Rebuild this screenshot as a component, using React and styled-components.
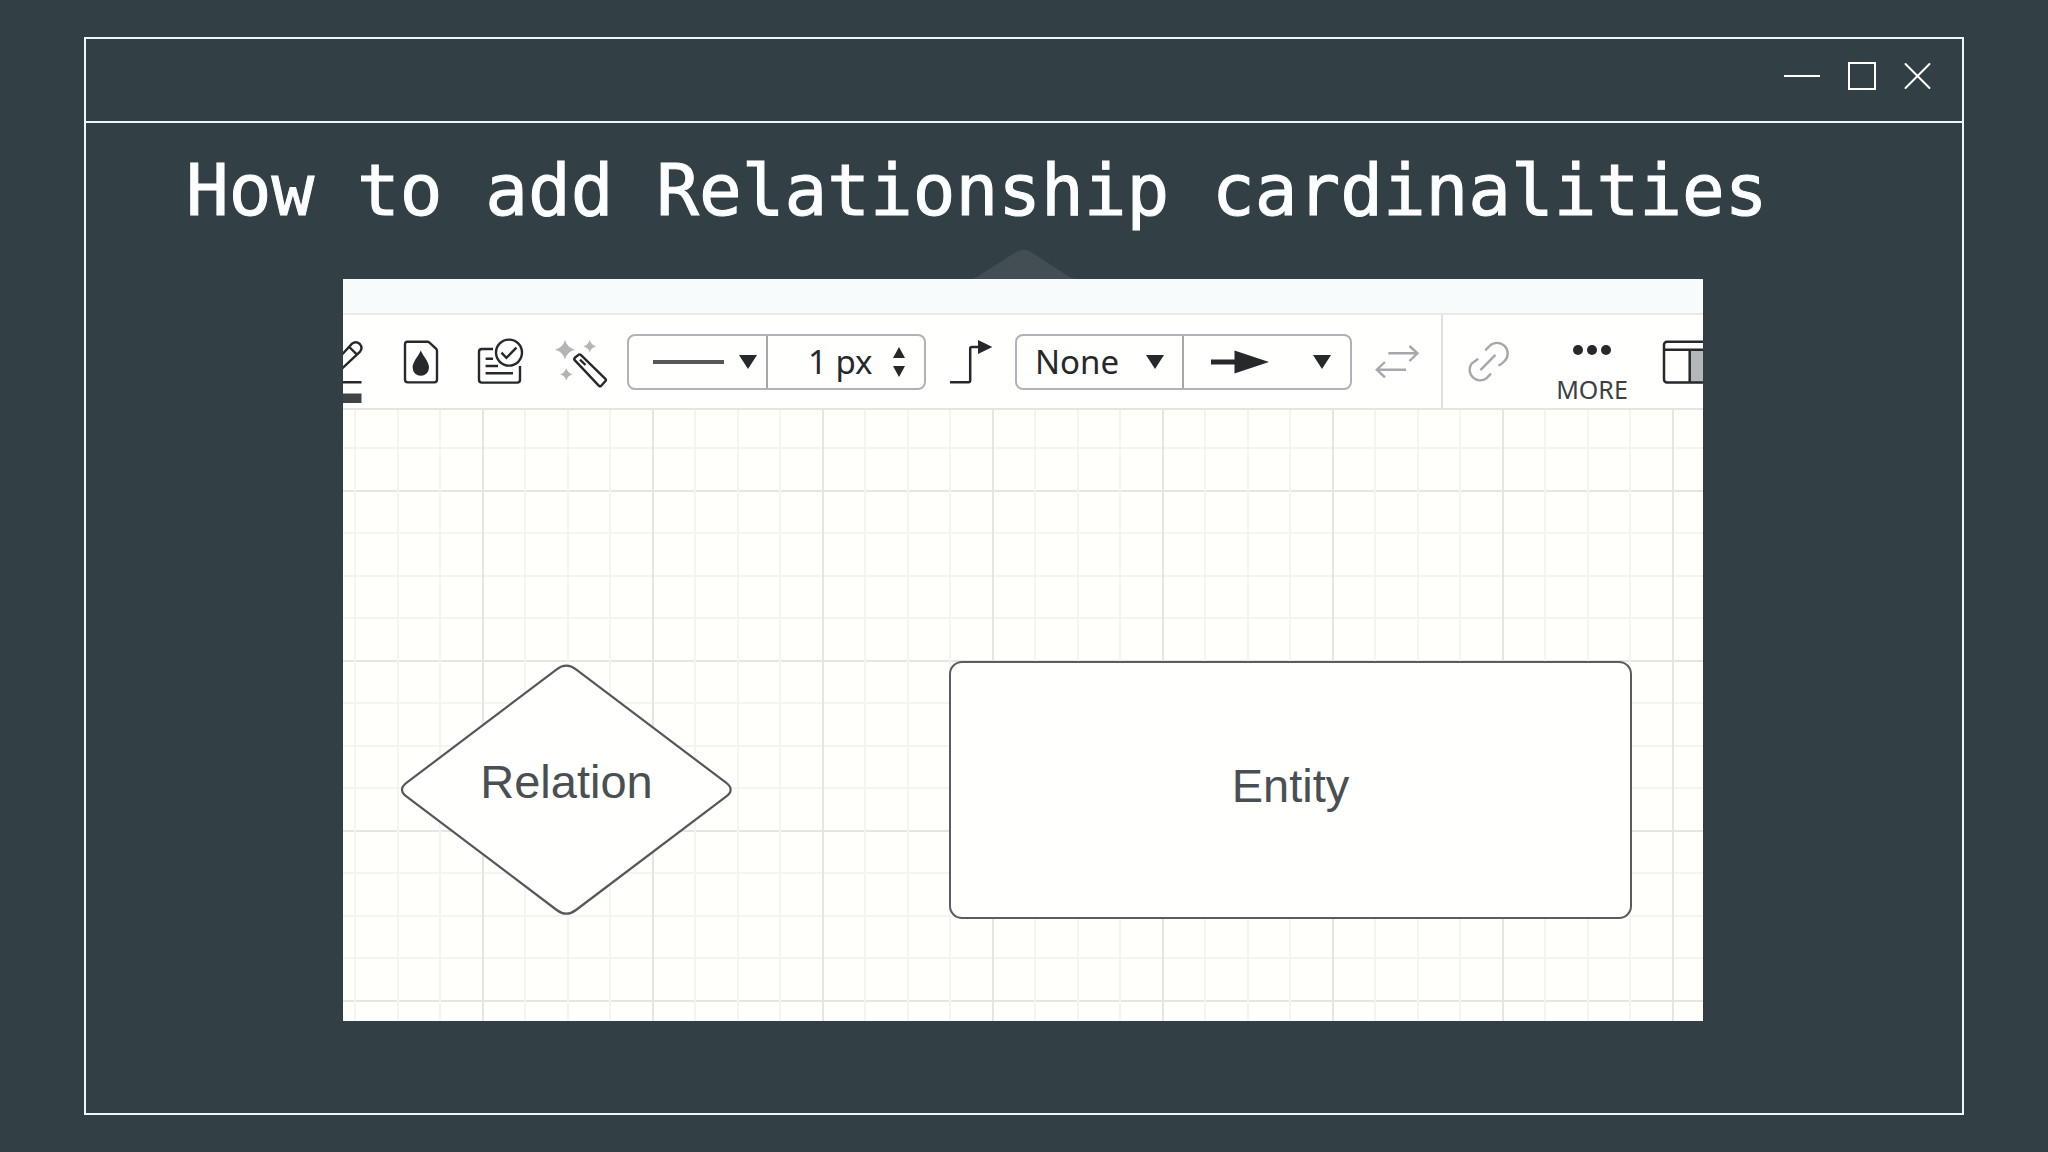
import React, { useState } from 'react';
import styled, { createGlobalStyle } from 'styled-components';

const ink = '#25292c';
const muted = '#a6a8a9';
const slate = '#323f44';
const frameLine = '#eef6f6';

const GlobalStyle = createGlobalStyle`
  * {
    box-sizing: border-box;
  }

  body {
    margin: 0;
    background: ${slate};
  }

  button, input, select {
    font: inherit;
    color: inherit;
    border: 0;
    margin: 0;
    padding: 0;
    background: none;
  }
`;

const Slide = styled.div`
  display: flex;
  min-height: 100vh;
  padding: 37px 84px;
  background: ${slate};
`;

const WindowFrame = styled.main`
  flex: 1;
  min-width: 0;
  border: 2px solid ${frameLine};
`;

const TitleBar = styled.header`
  display: flex;
  justify-content: flex-end;
  align-items: center;
  gap: 28px;
  padding: 23px 31px 31px;
  border-bottom: 2px solid ${frameLine};
`;

const WindowButton = styled.button`
  display: flex;
  color: #ffffff;
  cursor: pointer;
`;

const Title = styled.h1`
  margin: 26px 0 16px;
  padding-left: 100px;
  font-family: 'DejaVu Sans Mono', monospace;
  font-size: 71px;
  font-weight: 400;
  line-height: 84px;
  color: #fcfeff;
  -webkit-text-stroke: 1px #fcfeff;
`;

const Peak = styled.svg`
  display: block;
  margin: 0 auto;
`;

const Content = styled.section`
  padding: 0 259px 0 257px;
`;

const Editor = styled.div`
  overflow: hidden;
  background: #fffffc;
  font-family: 'Noto Sans', sans-serif;
  color: ${ink};
`;

const TopStrip = styled.div`
  height: 36px;
  background: #f8fbfb;
  border-bottom: 2px solid #e8eaea;
`;

const Toolbar = styled.div`
  display: flex;
  align-items: center;
  height: 95px;
  background: #fffffe;
  border-bottom: 2px solid #e5e6e3;
`;

const Tool = styled.button`
  flex: none;
  display: flex;
  align-items: center;
  justify-content: ${({ $align }) => $align || 'center'};
  width: ${({ $width }) => $width || 80}px;
  height: 100%;
  color: ${({ $muted }) => ($muted ? muted : ink)};
  cursor: pointer;
`;

const FieldGroup = styled.div`
  flex: none;
  display: flex;
  height: 56px;
  margin-left: ${({ $indent }) => $indent || 0}px;
  border: 2px solid #b0b2b3;
  border-radius: 8px;
  font-size: 33px;
  line-height: 40px;
`;

const Field = styled.div`
  display: flex;
  align-items: center;
  justify-content: space-between;
  width: ${({ $width }) => $width}px;
  padding: ${({ $padding }) => $padding};

  & + & {
    border-left: 2px solid #a4a6a7;
  }
`;

const MenuButton = styled.button`
  flex: 1;
  display: flex;
  align-items: center;
  justify-content: space-between;
  height: 100%;
  cursor: pointer;
`;

const StyleSelect = styled.select`
  flex: 1;
  min-width: 0;
  appearance: none;
  outline: none;
`;

const WidthInput = styled.input`
  width: 72px;
  outline: none;
`;

const Stepper = styled.div`
  display: flex;
  flex-direction: column;
  gap: 8px;
`;

const StepButton = styled.button`
  display: flex;
  cursor: pointer;
`;

const Divider = styled.div`
  flex: none;
  width: 2px;
  height: 100%;
  background: #dedfe0;
`;

const MoreButton = styled.button`
  flex: none;
  display: flex;
  flex-direction: column;
  align-items: center;
  gap: 16px;
  width: 120px;
  padding-top: 26px;
  font-size: 25px;
  line-height: 34px;
  color: #3c4044;
  cursor: pointer;
`;

// Four cells per major line, the minor lines sit at 42, 85 and 127
const gridLines = (direction) => `
  linear-gradient(${direction}, #e4e6e2 2px, transparent 2px),
  linear-gradient(${direction}, transparent 42px, #f4f5f1 42px, #f4f5f1 44px, transparent 44px,
    transparent 85px, #f4f5f1 85px, #f4f5f1 87px, transparent 87px,
    transparent 127px, #f4f5f1 127px, #f4f5f1 129px, transparent 129px)
`;

const Canvas = styled.div`
  position: relative;
  height: 611px;
  background-color: #fffffc;
  background-image: ${gridLines('to right')}, ${gridLines('to bottom')};
  background-size: 170px 170px;
  background-position: 139px 80px;
`;

const Node = styled.div`
  position: absolute;
  left: ${({ $x }) => $x}px;
  top: ${({ $y }) => $y}px;
  display: flex;
  align-items: center;
  justify-content: center;
  width: ${({ $width }) => $width}px;
  height: ${({ $height }) => $height}px;
  font-family: 'Liberation Sans', Arial, sans-serif;
  font-size: 47px;
  line-height: 56px;
  color: #4a4f54;
`;

const EntityNode = styled(Node)`
  padding-bottom: 8px;
  border: 2px solid #5a5c60;
  border-radius: 13px;
  background: #fffffd;
`;

const RelationNode = styled(Node)`
  padding-bottom: 16px;
`;

const DiamondShape = styled.svg`
  position: absolute;
  inset: 0;
`;

const NodeLabel = styled.span`
  position: relative;
`;

const Caret = () => (
  <svg width="18" height="14" viewBox="0 0 18 14" aria-hidden="true">
    <path d="M0 0H18L9 14Z" fill={ink} />
  </svg>
);

const PencilIcon = () => (
  <svg width="20" height="84" viewBox="0 -20 20 84" fill="none" stroke="currentColor" strokeWidth="2.4">
    <path d="M-1 14.5L9 3.6Q13 0.5 16.8 4Q20.2 8 16.8 12L-1 28.6M6.3 7L13.7 14.3M-1 42.3H18.5" />
    <path d="M-1 53.5H18.5V63H-1Z" fill="#3e4447" stroke="none" />
  </svg>
);

const FillIcon = () => (
  <svg width="36" height="44" viewBox="0 0 36 44">
    <path
      d="M4.5 1.8H24.5Q25.5 1.8 26.2 2.4L33 8.6Q34 9.6 34 11V39.6Q34 42.4 31.2 42.4H4.8Q2 42.4 2 39.6V4.4Q2 1.8 4.5 1.8Z"
      fill="none"
      stroke="currentColor"
      strokeWidth="2.4"
    />
    <path d="M17.8 10.5C20 16 26 21.5 26 27.6A8.2 8.2 0 0 1 9.6 27.6C9.6 21.5 15.6 16 17.8 10.5Z" fill="currentColor" />
  </svg>
);

const ThemeIcon = () => (
  <svg width="48" height="48" viewBox="0 0 48 48" fill="none" stroke="currentColor" strokeWidth="2.4">
    <circle cx="32" cy="14.6" r="13" />
    <path d="M24.4 14.6L29.4 19.8L39.4 9.6" />
    <path d="M16 11H4.8Q2 11 2 13.8V41.8Q2 44.6 4.8 44.6H40.2Q43 44.6 43 41.8V28" />
    <path d="M8.6 20.8H16M8.6 28H21M8.6 35.2H36" />
  </svg>
);

const WandIcon = () => (
  <svg width="54" height="52" viewBox="0 0 54 52">
    <g fill="#b3b5b4">
      <path d="M11 4Q13 11.7 21 13.7Q13 15.7 11 23.4Q9 15.7 1 13.7Q9 11.7 11 4Z" />
      <path d="M35.7 4Q37 9 42.2 10.3Q37 11.6 35.7 16.6Q34.4 11.6 29.2 10.3Q34.4 9 35.7 4Z" />
      <path d="M12.3 32Q13.6 37 18.6 38.3Q13.6 39.6 12.3 44.6Q11 39.6 6 38.3Q11 37 12.3 32Z" />
    </g>
    <g fill="none" stroke="currentColor" strokeWidth="2.4" strokeLinejoin="round">
      <path d="M20.8 21.8L24.8 18.6Q25.8 18 26.8 18.9L51.4 42.9Q52.4 44 51.5 45L47.2 49.8Q46 50.8 45 49.8L20.7 24.2Q19.7 22.8 20.8 21.8Z" />
      <path d="M26 23.6L31.5 29" />
    </g>
  </svg>
);

const LineSample = () => (
  <svg width="72" height="6" viewBox="0 0 72 6">
    <path d="M0 3H71" stroke="#55575a" strokeWidth="4" />
  </svg>
);

const ElbowIcon = () => (
  <svg width="44" height="46" viewBox="0 0 44 46">
    <path d="M1 43.3H19.5Q21.2 43.3 21.2 41.6V9.6Q21.2 8 22.8 8H31" fill="none" stroke="currentColor" strokeWidth="2.5" />
    <path d="M29 1L43.4 8L29 15Z" fill="currentColor" />
  </svg>
);

const ArrowSample = () => (
  <svg width="58" height="24" viewBox="0 0 58 24">
    <path d="M0 12H26" stroke="currentColor" strokeWidth="5" />
    <path d="M23.5 0.5L58 12L23.5 23.5Z" fill="currentColor" />
  </svg>
);

const SwapIcon = () => (
  <svg width="44" height="36" viewBox="0 0 44 36" fill="none" stroke="currentColor" strokeWidth="2.4">
    <path d="M13.3 9.3H42.5M34.5 2L42.5 9.3L34.5 17" />
    <path d="M31 25.7H1.8M10 18L1.8 25.7L10 33.4" />
  </svg>
);

const LinkIcon = () => (
  <svg width="42" height="42" viewBox="0 0 42 42" fill="none" stroke="currentColor" strokeWidth="2.4">
    <path d="M18.3 9.4L22.4 5A10.6 10.6 0 0 1 37.6 20Q34.5 23.4 31.4 24.6" />
    <path d="M11.2 17.8L4.4 22.9A10.6 10.6 0 0 0 19.4 37.4L24 32.6" />
    <path d="M13.4 29.2L28.4 13.8" />
  </svg>
);

const DotsIcon = () => (
  <svg width="40" height="12" viewBox="0 0 40 12" fill={ink}>
    <circle cx="6" cy="6" r="5" />
    <circle cx="20" cy="6" r="5" />
    <circle cx="34" cy="6" r="5" />
  </svg>
);

const PanelIcon = () => (
  <svg width="60" height="44" viewBox="0 0 60 44">
    <path d="M28 10H58V42H28Z" fill="#b4b7ba" />
    <rect x="2" y="1.8" width="56" height="40.6" rx="3" fill="none" stroke="currentColor" strokeWidth="2.5" />
    <path d="M2 9.7H58M27.7 9.7V42" stroke="currentColor" strokeWidth="2.5" />
  </svg>
);

const WindowControls = () => (
  <TitleBar>
    <WindowButton aria-label="Minimize">
      <svg width="36" height="28" viewBox="0 0 36 28" stroke="currentColor" strokeWidth="2">
        <path d="M0 14H36" />
      </svg>
    </WindowButton>
    <WindowButton aria-label="Maximize">
      <svg width="28" height="28" viewBox="0 0 28 28" fill="none" stroke="currentColor" strokeWidth="2">
        <rect x="1" y="1" width="26" height="26" />
      </svg>
    </WindowButton>
    <WindowButton aria-label="Close">
      <svg width="27" height="28" viewBox="0 0 27 28" stroke="currentColor" strokeWidth="2" strokeLinecap="round">
        <path d="M1.5 2L25.5 26M25.5 2L1.5 26" />
      </svg>
    </WindowButton>
  </TitleBar>
);

const EditorToolbar = () => {
  const [lineWidth, setLineWidth] = useState(1);

  return (
    <Toolbar>
      <Tool $width={38} $align="flex-start" aria-label="Line color"><PencilIcon /></Tool>
      <Tool aria-label="Fill"><FillIcon /></Tool>
      <Tool aria-label="Theme"><ThemeIcon /></Tool>
      <Tool aria-label="Magic format"><WandIcon /></Tool>
      <FieldGroup $indent={6}>
        <Field $width={137} $padding="0 9px 0 24px">
          <MenuButton aria-label="Line style" aria-haspopup="menu">
            <LineSample />
            <Caret />
          </MenuButton>
        </Field>
        <Field $width={158} $padding="0 18px 0 40px">
          <WidthInput
            aria-label="Line width"
            value={`${lineWidth} px`}
            onChange={(e) => setLineWidth(parseInt(e.target.value, 10) || 1)}
          />
          <Stepper>
            <StepButton aria-label="Increase" onClick={() => setLineWidth(lineWidth + 1)}>
              <svg width="14" height="11" viewBox="0 0 14 11"><path d="M7 0L13 11H1Z" fill={ink} /></svg>
            </StepButton>
            <StepButton aria-label="Decrease" onClick={() => setLineWidth(Math.max(1, lineWidth - 1))}>
              <svg width="14" height="11" viewBox="0 0 14 11"><path d="M7 11L1 0H13Z" fill={ink} /></svg>
            </StepButton>
          </Stepper>
        </Field>
      </FieldGroup>
      <Tool $width={89} aria-label="Line shape"><ElbowIcon /></Tool>
      <FieldGroup>
        <Field $width={165} $padding="0 18px">
          <StyleSelect aria-label="Line start" defaultValue="none">
            <option value="none">None</option>
            <option value="arrow">Arrow</option>
          </StyleSelect>
          <Caret />
        </Field>
        <Field $width={168} $padding="0 19px 0 27px">
          <MenuButton aria-label="Line end" aria-haspopup="menu">
            <ArrowSample />
            <Caret />
          </MenuButton>
        </Field>
      </FieldGroup>
      <Tool $width={89} $muted aria-label="Swap ends"><SwapIcon /></Tool>
      <Divider />
      <Tool $width={89} $muted aria-label="Link"><LinkIcon /></Tool>
      <MoreButton>
        <DotsIcon />
        MORE
      </MoreButton>
      <Tool aria-label="Panels"><PanelIcon /></Tool>
    </Toolbar>
  );
};

const Diagram = () => (
  <Canvas>
    <RelationNode $x={57} $y={253} $width={333} $height={254}>
      <DiamondShape width="333" height="254" viewBox="0 0 333 254">
        <path
          d="M6.7 119.7L156.7 6.3Q166.3 -1 176 6.3L326 119.7Q335.3 126.7 326 133.7L176 247Q166.3 254.3 156.7 247L6.7 133.7Q-2.7 126.7 6.7 119.7Z"
          fill="#fffffd"
          stroke="#55575b"
          strokeWidth="2.2"
        />
      </DiamondShape>
      <NodeLabel>Relation</NodeLabel>
    </RelationNode>
    <EntityNode $x={606} $y={251} $width={683} $height={258}>
      <NodeLabel>Entity</NodeLabel>
    </EntityNode>
  </Canvas>
);

const App = () => {
  return (
    <>
      <GlobalStyle />
      <Slide>
        <WindowFrame>
          <WindowControls />
          <Title>How to add Relationship cardinalities</Title>
          <Peak width="104" height="30" viewBox="0 0 104 30">
            <path d="M0 30Q8 27 14 22L44 3Q52 -2 59 3L90 23Q96 28 104 30Z" fill="#434d54" />
          </Peak>
          <Content>
            <Editor>
              <TopStrip />
              <EditorToolbar />
              <Diagram />
            </Editor>
          </Content>
        </WindowFrame>
      </Slide>
    </>
  );
};

export default App;
